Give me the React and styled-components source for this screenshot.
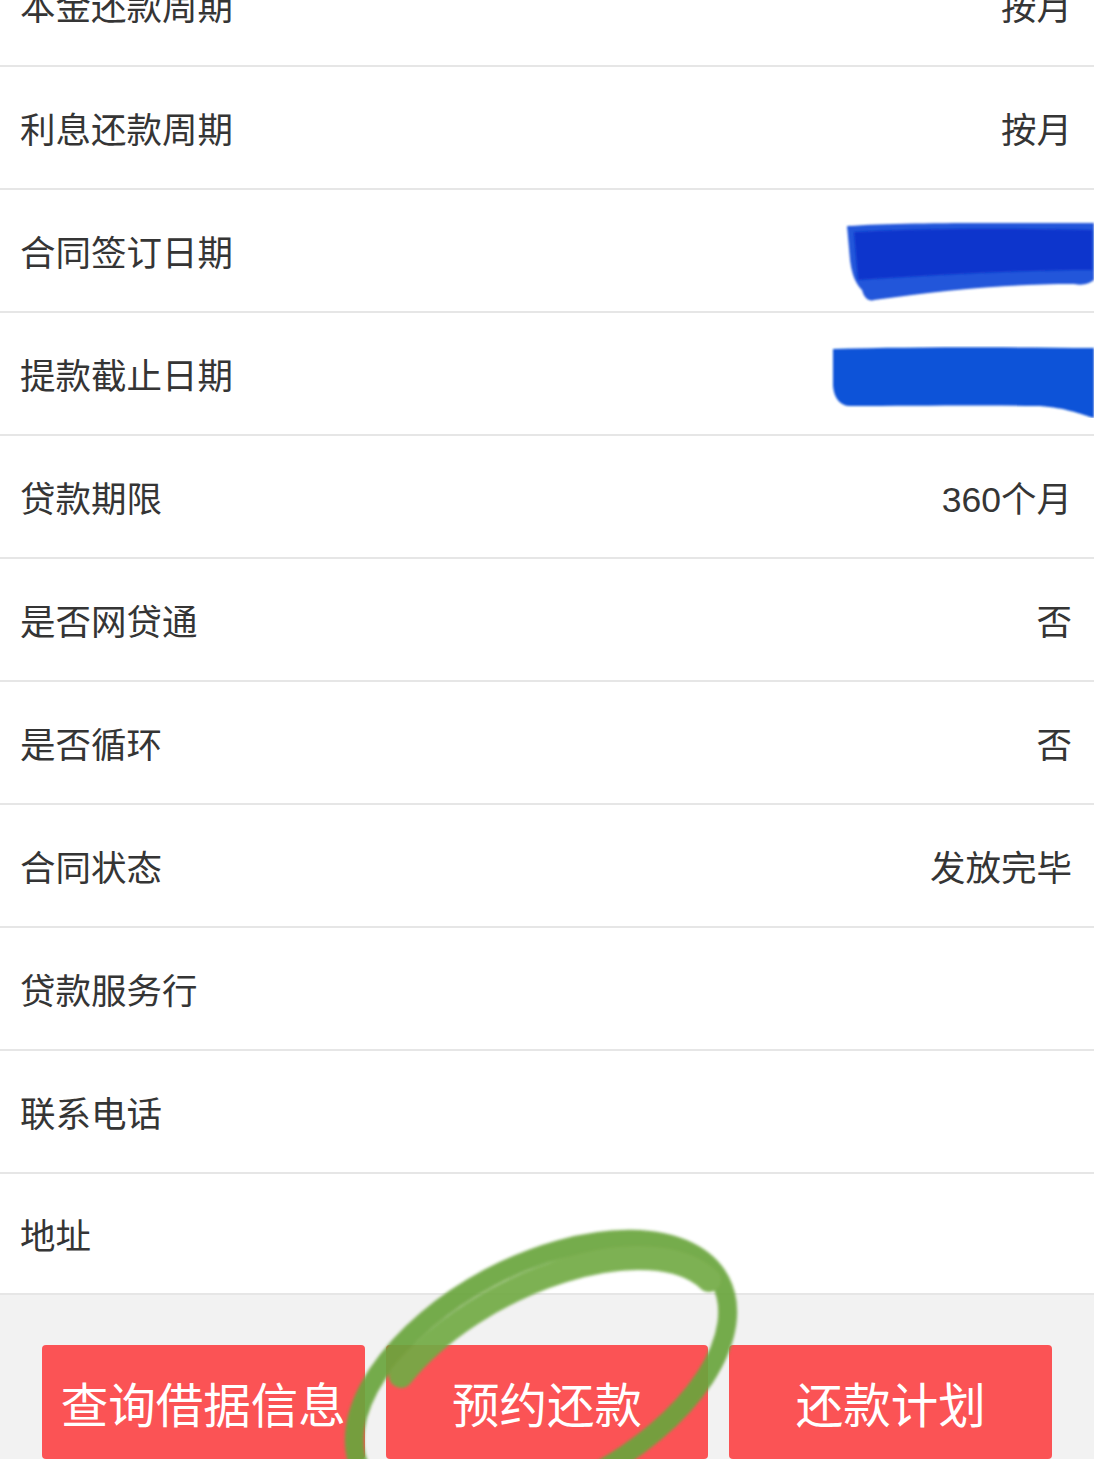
import React from "react";
import styled, { createGlobalStyle } from "styled-components";

const GlobalStyle = createGlobalStyle`
  html, body {
    margin: 0;
    padding: 0;
    overflow: hidden;
    background: #ffffff;
  }
  body {
    font-family: "Liberation Sans", "Noto Sans CJK SC", sans-serif;
  }
`;

const Page = styled.div`
  position: relative;
  width: 1094px;
  height: 1459px;
  overflow: hidden;
`;

// the list is scrolled: first row is half above the top edge
const List = styled.div`
  margin-top: -56px;
  background: #ffffff;
`;

const Row = styled.div`
  position: relative;
  display: flex;
  align-items: center;
  justify-content: space-between;
  height: ${(p) => (p.$last ? 119 : 121)}px;
  padding: 0 22px 0 20px;
  border-bottom: ${(p) => (p.$last ? "none" : "2px solid #e6e6e6")};
  font-size: 35.5px;
  color: #353535;
`;

const Label = styled.span`
  font-family: "Noto Sans CJK SC", sans-serif;
`;

const Value = styled.span`
  font-family: "Liberation Sans", "Noto Sans CJK SC", sans-serif;
`;

const Scribble = styled.svg`
  position: absolute;
  right: 0;
  top: ${(p) => p.$top}px;
  pointer-events: none;
`;

const Footer = styled.div`
  border-top: 2px solid #e6e6e6;
  background: #f2f2f2;
  padding: 50px 42px 60px;
  display: grid;
  grid-template-columns: repeat(3, 1fr);
  gap: 21px;
`;

const Button = styled.button`
  height: 114px;
  border: none;
  border-radius: 4px;
  background: #fb5355;
  color: #ffffff;
  font-family: "Noto Sans CJK SC", sans-serif;
  font-size: 47.5px;
  padding: 0;
  white-space: nowrap;
`;

const Annotation = styled.svg`
  position: absolute;
  left: 0;
  top: 0;
  pointer-events: none;
`;

const rows = [
  ["本金还款周期", "按月"],
  ["利息还款周期", "按月"],
  ["合同签订日期", "", 1],
  ["提款截止日期", "", 2],
  ["贷款期限", "360个月"],
  ["是否网贷通", "否"],
  ["是否循环", "否"],
  ["合同状态", "发放完毕"],
  ["贷款服务行", ""],
  ["联系电话", ""],
  ["地址", ""],
];

function BlueMark({ kind }) {
  if (kind === 1) {
    return (
      <Scribble $top={30} width="250" height="84" viewBox="0 0 250 84">
        <defs>
          <filter id="soft1">
            <feGaussianBlur stdDeviation="1.2" />
          </filter>
        </defs>
        <path
          d="M3 6 C60 2 150 3 250 3 L250 60 C246 63 240 66 230 64 C160 64 100 70 30 80 C25 82 20 78 18 70 C12 64 8 56 6 40 Z"
          fill="#2456da"
          filter="url(#soft1)"
        />
        <path
          d="M10 12 C80 8 160 8 248 10 L248 50 C180 50 100 54 14 60 Z"
          fill="#0a36cc"
          filter="url(#soft1)"
        />
      </Scribble>
    );
  }
  return (
    <Scribble $top={33} width="264" height="72" viewBox="0 0 264 72">
      <defs>
        <filter id="soft2">
          <feGaussianBlur stdDeviation="1.2" />
        </filter>
      </defs>
      <path
        d="M3 3 C80 1 180 1 264 2 L264 72 C250 68 236 62 210 60 C150 59 80 60 20 60 C10 60 4 52 3 40 Z"
        fill="#0f53d8"
        filter="url(#soft2)"
      />
    </Scribble>
  );
}

export default function App() {
  return (
    <>
      <GlobalStyle />
      <Page>
        <List>
          {rows.map(([label, value, mark], i) => (
            <Row key={label} $last={i === rows.length - 1}>
              <Label>{label}</Label>
              <Value>{value}</Value>
              {mark ? <BlueMark kind={mark} /> : null}
            </Row>
          ))}
        </List>
        <Footer>
          <Button>查询借据信息</Button>
          <Button>预约还款</Button>
          <Button>还款计划</Button>
        </Footer>
        <Annotation width="1094" height="1459" viewBox="0 0 1094 1459">
          <defs>
            <filter id="penSoft">
              <feGaussianBlur stdDeviation="1.4" />
            </filter>
          </defs>
          <g filter="url(#penSoft)" fill="none" strokeLinecap="round" opacity="0.92">
            <ellipse
              cx="541"
              cy="1376"
              rx="203"
              ry="111"
              transform="rotate(-28 541 1376)"
              stroke="#6ba53c"
              strokeWidth="19"
            />
            <path
              d="M401 1376 A195 100 -28 0 1 709 1280"
              stroke="#72ab45"
              strokeWidth="24"
            />
          </g>
        </Annotation>
      </Page>
    </>
  );
}
